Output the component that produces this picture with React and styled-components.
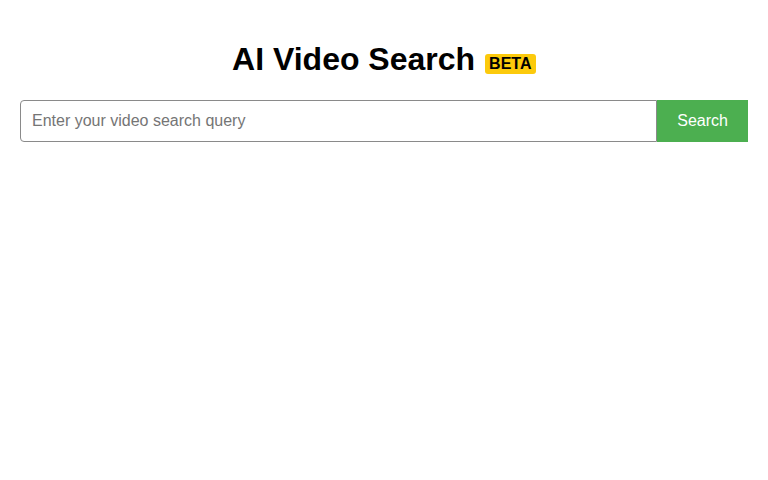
import React from "react";
import styled, { createGlobalStyle } from "styled-components";

const Global = createGlobalStyle`
  html, body { margin: 0; padding: 0; background: #fff; }
  body { font-family: "Liberation Sans", Arial, sans-serif; }
`;

const Page = styled.div`
  padding: 20px;
`;

const Title = styled.h1`
  font-size: 32px;
  font-weight: bold;
  margin: 21.44px 0;
  text-align: center;
  color: #000;
`;

const Badge = styled.span`
  display: inline-block;
  background: #fcca0c;
  color: #000;
  font-size: 16px;
  font-weight: bold;
  padding: 1px 4.5px;
  border-radius: 3px;
  margin-left: 9.5px;
  vertical-align: 1px;
  line-height: 18px;
`;

const SearchRow = styled.form`
  display: flex;
  height: 42px;
`;

const Input = styled.input`
  flex: 1;
  box-sizing: border-box;
  height: 42px;
  padding: 10px 11px;
  font-size: 16px;
  font-family: "Liberation Sans", Arial, sans-serif;
  border: 1px solid #8a8a8a;
  border-radius: 4px 0 0 4px;
  outline: none;
  &::placeholder { color: #757575; }
`;

const Button = styled.button`
  box-sizing: border-box;
  height: 42px;
  padding: 0 20px;
  background: #4caf50;
  color: #fff;
  border: none;
  font-size: 16px;
  font-family: "Liberation Sans", Arial, sans-serif;
  cursor: pointer;
`;

export default function App() {
  return (
    <>
      <Global />
      <Page>
        <Title>
          AI Video Search<Badge>BETA</Badge>
        </Title>
        <SearchRow onSubmit={(e) => e.preventDefault()}>
          <Input placeholder="Enter your video search query" />
          <Button type="submit">Search</Button>
        </SearchRow>
      </Page>
    </>
  );
}
